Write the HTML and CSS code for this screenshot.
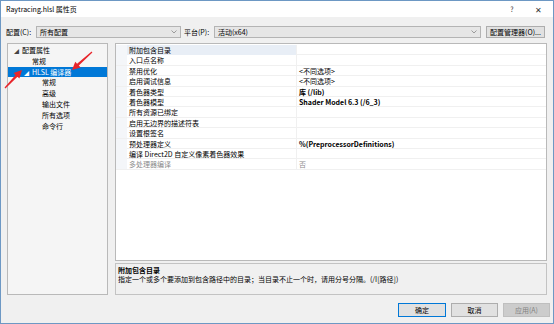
FILE: index.html
```html
<!DOCTYPE html>
<html lang="zh-CN">
<head>
	<meta charset="utf-8" />
	<title>Raytracing.hlsl 属性页</title>
	<link rel="stylesheet" href="styles.css">
</head>
<body>
	<div class="window">
		<div class="titlebar">
			<span class="title">Raytracing.hlsl 属性页</span>
			<span class="caption-btn">?</span>
			<span class="caption-btn close">✕</span>
		</div>

		<div class="toolbar">
			<span class="lbl">配置(C):</span>
			<div class="combo config">所有配置<svg class="chev" width="6" height="4" viewBox="0 0 6 4"><path d="M0.5 0.5 L3 3 L5.5 0.5" fill="none" stroke="#888" stroke-width="0.8"/></svg></div>
			<span class="lbl platform-lbl">平台(P):</span>
			<div class="combo platform">活动(x64)<svg class="chev" width="6" height="4" viewBox="0 0 6 4"><path d="M0.5 0.5 L3 3 L5.5 0.5" fill="none" stroke="#888" stroke-width="0.8"/></svg></div>
			<button class="btn manager">配置管理器(O)...</button>
		</div>

		<div class="main">
			<div class="tree">
				<div class="node lvl0"><span class="tri">◢</span>配置属性</div>
				<div class="node lvl1">常规</div>
				<div class="node lvl1 selected"><span class="tri">◢</span>HLSL 编译器</div>
				<div class="node lvl2">常规</div>
				<div class="node lvl2">高级</div>
				<div class="node lvl2">输出文件</div>
				<div class="node lvl2">所有选项</div>
				<div class="node lvl2">命令行</div>
			</div>

			<div class="right">
				<div class="grid">
					<div class="row current"><span class="gutter"></span><span class="name">附加包含目录</span><span class="value"></span></div>
					<div class="row"><span class="gutter"></span><span class="name">入口点名称</span><span class="value"></span></div>
					<div class="row"><span class="gutter"></span><span class="name">禁用优化</span><span class="value">&lt;不同选项&gt;</span></div>
					<div class="row"><span class="gutter"></span><span class="name">启用调试信息</span><span class="value">&lt;不同选项&gt;</span></div>
					<div class="row"><span class="gutter"></span><span class="name">着色器类型</span><span class="value bold">库 (/lib)</span></div>
					<div class="row"><span class="gutter"></span><span class="name">着色器模型</span><span class="value bold">Shader Model 6.3 (/6_3)</span></div>
					<div class="row"><span class="gutter"></span><span class="name">所有资源已绑定</span><span class="value"></span></div>
					<div class="row"><span class="gutter"></span><span class="name">启用无边界的描述符表</span><span class="value"></span></div>
					<div class="row"><span class="gutter"></span><span class="name">设置根签名</span><span class="value"></span></div>
					<div class="row"><span class="gutter"></span><span class="name">预处理器定义</span><span class="value bold">%(PreprocessorDefinitions)</span></div>
					<div class="row"><span class="gutter"></span><span class="name">编译 Direct2D 自定义像素着色器效果</span><span class="value"></span></div>
					<div class="row disabled"><span class="gutter"></span><span class="name">多处理器编译</span><span class="value">否</span></div>
				</div>
				<div class="desc">
					<div class="desc-title">附加包含目录</div>
					<div>指定一个或多个要添加到包含路径中的目录；当目录不止一个时，请用分号分隔。(/I[路径])</div>
				</div>
			</div>
		</div>

		<div class="footer">
			<button class="btn default">确定</button>
			<button class="btn">取消</button>
			<button class="btn" disabled>应用(A)</button>
		</div>

		<!-- annotation arrows drawn over the screenshot -->
		<svg class="arrows" width="554" height="324" viewBox="0 0 554 324">
			<polygon points="91.6,51.55 92.4,52.45 78.81,65.62 80.62,67.62 72,70 75.26,61.68 77.07,63.68" fill="#e8252b"/>
			<polygon points="4.56,87.59 5.44,88.41 17.45,76.71 19.41,78.57 22,70 13.59,73.07 15.55,74.93" fill="#e8252b"/>
		</svg>
	</div>
</body>
</html>
```

FILE: styles.css
```css
body {
	margin: 0;
	font-family: "Noto Sans CJK SC", sans-serif;
	font-size: 7px;
	color: #000;
}
.window {
	position: relative;
	width: 554px;
	height: 324px;
	box-sizing: border-box;
	border: 1px solid #6d98c4;
	background: #f0f0f0;
	display: flex;
	flex-direction: column;
}
.titlebar {
	height: 16px;
	background: #fff;
	display: flex;
	align-items: center;
	padding-left: 5px;
}
.title {
	flex: 1;
}
.caption-btn {
	width: 26px;
	text-align: center;
	color: #333;
}
.close {
	font-size: 8px;
	margin-right: 2px;
}

/* config row */
.toolbar {
	display: flex;
	align-items: center;
	height: 12px;
	margin-top: 9px;
	padding-left: 5px;
}
.lbl {
	width: 30px;
}
.platform-lbl {
	margin-left: 3px;
}
.combo {
	height: 12px;
	box-sizing: border-box;
	border: 1px solid #b4b4b4;
	background: #e6e6e6;
	display: flex;
	align-items: center;
	padding-left: 3px;
}
.combo .chev {
	margin-left: auto;
	margin-right: 3px;
}
.config {
	width: 145px;
}
.platform {
	width: 267px;
}
.btn {
	font: inherit;
	color: #000;
	height: 14px;
	padding: 0;
	box-sizing: border-box;
	border: 1px solid #adadad;
	background: #e1e1e1;
}
.manager {
	width: 59px;
	height: 12px;
	margin-left: 5px;
}

/* tree + grid */
.main {
	height: 252px;
	margin-top: 5px;
	padding: 0 6px;
	display: flex;
	gap: 7px;
}
.tree {
	width: 101px;
	box-sizing: border-box;
	border: 1px solid #b9b9b9;
	background: #f5f5f5;
	padding-top: 1px;
}
.node {
	height: 10.8px;
	line-height: 10.8px;
	white-space: nowrap;
}
.tri {
	display: inline-block;
	width: 8px;
	font-size: 5px;
	color: #444;
}
.lvl0 {
	padding-left: 6px;
}
.lvl1 {
	padding-left: 24px;
}
.lvl1.selected {
	padding-left: 16px;
	background: #0078d7;
	color: #fff;
}
.lvl1.selected .tri {
	color: #fff;
}
.lvl2 {
	padding-left: 34px;
}

.right {
	width: 432px;
	display: flex;
	flex-direction: column;
	gap: 2px;
}
.grid {
	height: 218px;
	box-sizing: border-box;
	border: 1px solid #b9b9b9;
	background: #fff;
	padding-top: 1px;
}
.row {
	display: grid;
	grid-template-columns: 11px 170px 1fr;
	height: 10.4px;
	line-height: 10px;
	border-bottom: 0.4px solid #f0f0f0;
	box-sizing: border-box;
}
.gutter {
	background: #f4f6f9;
}
.name {
	padding-left: 2px;
	white-space: nowrap;
	border-right: 1px solid #f0f0f0;
}
.current .name {
	background: #e8eef6;
}
.value {
	padding-left: 2px;
	white-space: nowrap;
}
.bold {
	font-weight: bold;
}
.disabled {
	color: #8a8a8a;
}
.desc {
	height: 32px;
	box-sizing: border-box;
	border: 1px solid #c3c3c3;
	padding: 2px 2px 0;
	line-height: 9px;
}
.desc-title {
	font-weight: bold;
}

/* dialog buttons */
.footer {
	display: flex;
	justify-content: flex-end;
	gap: 5px;
	margin-top: 8px;
	padding-right: 3px;
}
.footer .btn {
	width: 47px;
}
.footer .default {
	width: 48px;
	border-color: #0078d7;
}
.footer .btn:disabled {
	background: #cccccc;
	border-color: #bfbfbf;
	color: #838383;
}

.arrows {
	position: absolute;
	left: -1px;
	top: -1px;
	pointer-events: none;
}
```
